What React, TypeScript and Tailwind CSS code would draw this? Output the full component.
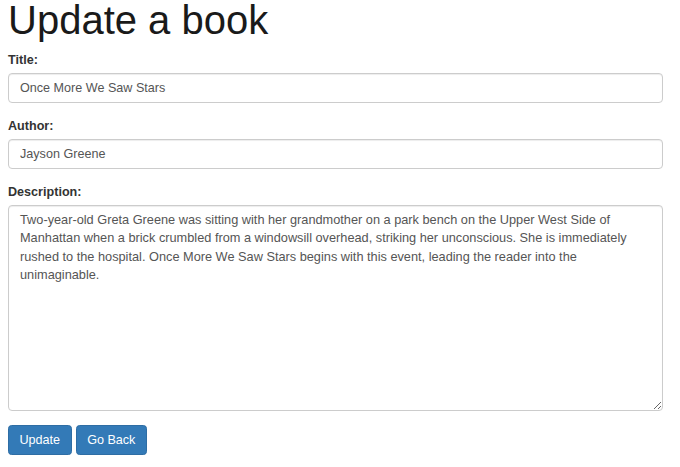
import { useState } from "react";

const inputCls =
  "block w-full h-[30px] px-[11px] rounded-[4px] border border-[#ccc] bg-white text-[12.6px] text-[#555] shadow-[inset_0_1px_1px_rgba(0,0,0,0.075)] outline-none";

const labelCls = "block mb-[4.5px] text-[12.6px] leading-[18px] font-bold text-[#333]";

const btnCls =
  "inline-block h-[30px] px-[10.5px] rounded-[3.6px] border border-[#2e6da4] bg-[#337ab7] text-white text-[12.6px] leading-[18px]";

export default function App() {
  const [title, setTitle] = useState("Once More We Saw Stars");
  const [author, setAuthor] = useState("Jayson Greene");
  const [description, setDescription] = useState(
    "Two-year-old Greta Greene was sitting with her grandmother on a park bench on the Upper West Side of Manhattan when a brick crumbled from a windowsill overhead, striking her unconscious. She is immediately rushed to the hospital. Once More We Saw Stars begins with this event, leading the reader into the unimaginable."
  );

  return (
    <div
      className="pl-2 pr-[17px] bg-white min-h-[467px] text-[#333]"
      style={{ fontFamily: '"Liberation Sans", Arial, sans-serif' }}
    >
      <h1 className="m-0 text-[40px] leading-[40px] font-normal text-[#1a1a1a]">Update a book</h1>

      <form className="mt-[10.5px]" onSubmit={(e) => e.preventDefault()}>
        <div className="mb-[13.5px]">
          <label className={labelCls}>Title:</label>
          <input className={inputCls} value={title} onChange={(e) => setTitle(e.target.value)} />
        </div>

        <div className="mb-[13.5px]">
          <label className={labelCls}>Author:</label>
          <input className={inputCls} value={author} onChange={(e) => setAuthor(e.target.value)} />
        </div>

        <div className="mb-[14px]">
          <label className={labelCls}>Description:</label>
          <textarea
            className="block w-full h-[206px] px-[11px] pt-[5px] rounded-[4px] border border-[#ccc] bg-white text-[12.75px] leading-[18.4px] text-[#555] shadow-[inset_0_1px_1px_rgba(0,0,0,0.075)] outline-none"
            value={description}
            onChange={(e) => setDescription(e.target.value)}
          />
        </div>

        <div className="flex gap-[4px]">
          <button type="submit" className={btnCls}>Update</button>
          <button type="button" className={btnCls}>Go Back</button>
        </div>
      </form>
    </div>
  );
}
